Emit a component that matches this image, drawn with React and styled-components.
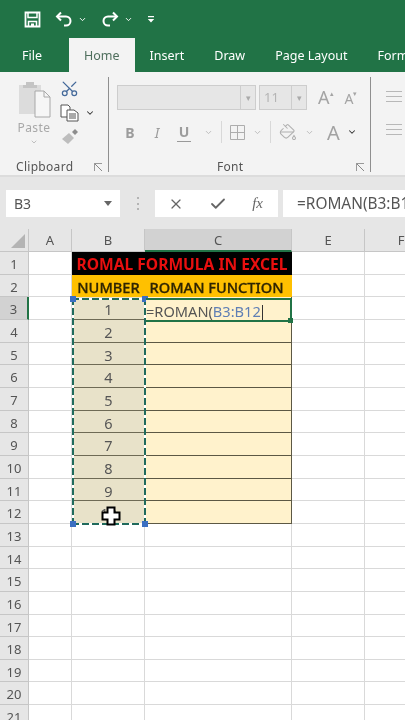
import React from "react";
import styled, { createGlobalStyle } from "styled-components";
import { Scissors, PaintBucket, ChevronDown, X, Check } from "lucide-react";

const Global = createGlobalStyle`
html, body { margin: 0; padding: 0; background: #fff; }
body { font-family: "Noto Sans", "Open Sans", sans-serif; overflow: hidden; }
`;

const rowCount = 21;
const numbers = ["1", "2", "3", "4", "5", "6", "7", "8", "9", "10"];

const Chev = ({ size = 9, color = "#555" }) => (
  <ChevronDown size={size} color={color} strokeWidth={2.5} />
);

const App = () => {
  const rows = [];
  for (let r = 1; r <= rowCount; r++) rows.push(r);

  return (
    <Page>
      <Global />
      <TitleBar>
        <svg width="17" height="17" viewBox="0 0 17 17" fill="none" stroke="#fff" strokeWidth="1.8">
          <path d="M1.5 1.5h14v14h-14z" />
          <path d="M4 1.5v5h9v-5M4.5 15.5v-5h8v5" strokeWidth="1.5" />
          <path d="M7 12.5h3v3h-3z" fill="#fff" stroke="none" />
        </svg>
        <QuickGroup>
          <svg width="18" height="17" viewBox="0 0 18 17" fill="none" stroke="#fff" strokeWidth="2">
            <path d="M6 1.5 2 5.5l4 4" />
            <path d="M2.5 5.5H11a4.5 4.5 0 0 1 0 9H9" />
          </svg>
          <Chev size={9} color="#fff" />
        </QuickGroup>
        <QuickGroup>
          <svg width="18" height="17" viewBox="0 0 18 17" fill="none" stroke="#fff" strokeWidth="2">
            <path d="m12 1.5 4 4-4 4" />
            <path d="M15.5 5.5H7a4.5 4.5 0 0 0 0 9h2" />
          </svg>
          <Chev size={9} color="#fff" />
        </QuickGroup>
        <svg width="9" height="9" viewBox="0 0 9 9" fill="#fff">
          <path d="M1 1h6v1.2H1zM0.8 4h6.4L4 7.6z" />
        </svg>
      </TitleBar>

      <Tabs>
        <Tab>File</Tab>
        <Tab $active>Home</Tab>
        <Tab>Insert</Tab>
        <Tab>Draw</Tab>
        <Tab>Page Layout</Tab>
        <Tab>Formulas</Tab>
      </Tabs>

      <Ribbon>
        <Group $width={109}>
          <GroupBody>
            <PasteCol>
              <svg width="33" height="38" viewBox="0 0 33 38">
                <path d="M1 5h22v29H1z" fill="#dcdcdc" />
                <path d="M8 2h8v3h3v3H5V5h3z" fill="#c4c4c4" />
                <path d="M17 11h9l6 6v20H17z" fill="#f6f6f6" stroke="#a8a8a8" />
                <path d="M26 11v6h6" fill="none" stroke="#a8a8a8" />
              </svg>
              <PasteLabel>Paste</PasteLabel>
              <Chev size={8} color="#b5b5b5" />
            </PasteCol>
            <SmallTools>
              <Scissors size={19} color="#44699a" strokeWidth={1.6} style={{ transform: "rotate(-90deg)" }} />
              <CopyRow>
                <svg width="19" height="18" viewBox="0 0 19 18" fill="#fff" stroke="#555" strokeWidth="1">
                  <path d="M1 1h7l2 2v10H1z" />
                  <path d="M7 6h7l4 3v8H7z" />
                  <path d="M9 10h7M9 12h7M9 14h7" />
                </svg>
                <Chev size={10} color="#333" />
              </CopyRow>
              <svg width="20" height="18" viewBox="0 0 20 18">
                <path d="M2 11 9 5l5 5-6 6z" fill="#bdbdbd" />
                <path d="M12 4l3-3 3 3-3 3z" fill="#8d8d8d" />
              </svg>
            </SmallTools>
          </GroupBody>
          <GroupFoot $indent={16}>
            Clipboard
            <Launcher />
          </GroupFoot>
        </Group>

        <Group $width={262}>
          <GroupBody $column>
            <FontRow>
              <Select $width={139} />
              <Select $width={48}>11</Select>
              <GrowIcons>
                <BigA>A<sup>▴</sup></BigA>
                <SmallA>A<sup>▾</sup></SmallA>
              </GrowIcons>
            </FontRow>
            <FontRow $second>
              <StyleLetter>B</StyleLetter>
              <StyleLetter $italic>I</StyleLetter>
              <StyleLetter $underline>U</StyleLetter>
              <Chev size={9} color="#bbb" />
              <Divider />
              <svg width="15" height="15" viewBox="0 0 15 15" fill="none" stroke="#adadad">
                <path d="M.5.5h14v14H.5zM7.5.5v14M.5 7.5h14" />
              </svg>
              <Chev size={9} color="#bbb" />
              <Divider />
              <PaintBucket size={18} color="#b0b0b0" strokeWidth={1.4} />
              <Chev size={9} color="#bbb" />
              <FontColor>A</FontColor>
              <Chev size={10} color="#333" />
            </FontRow>
          </GroupBody>
          <GroupFoot $indent={108}>
            Font
            <Launcher />
          </GroupFoot>
        </Group>

        <AlignGroup>
          <AlignLines />
          <AlignLines />
        </AlignGroup>
      </Ribbon>

      <FormulaBar>
        <NameBox>
          B3
          <Caret />
        </NameBox>
        <Dots>⋮</Dots>
        <FxBox>
          <X size={16} color="#666" strokeWidth={1.8} />
          <Check size={18} color="#666" strokeWidth={2.4} />
          <FxLabel>fx</FxLabel>
        </FxBox>
        <FormulaInput>=ROMAN(B3:B12</FormulaInput>
      </FormulaBar>

      <Sheet>
        <Corner>
          <svg width="14" height="14" viewBox="0 0 14 14">
            <path d="M14 0v14H0z" fill="#b4b4b4" />
          </svg>
        </Corner>
        <ColHead>A</ColHead>
        <ColHead>B</ColHead>
        <ColHead $selected>C</ColHead>
        <ColHead>E</ColHead>
        <ColHead>F</ColHead>

        {rows.map((r) => (
          <React.Fragment key={r}>
            <RowHead $selected={r === 3}>{r}</RowHead>
            <Cell />
            {r === 1 && <TitleCell>ROMAL FORMULA IN EXCEL</TitleCell>}
            {r === 2 && (
              <>
                <HeadCell>NUMBER</HeadCell>
                <HeadCell $tight>ROMAN FUNCTION</HeadCell>
              </>
            )}
            {r >= 3 && r <= 12 && (
              <>
                <NumCell>{numbers[r - 3]}</NumCell>
                <CreamCell />
              </>
            )}
            {r > 12 && (
              <>
                <Cell />
                <Cell />
              </>
            )}
            <Cell />
            <Cell />
          </React.Fragment>
        ))}

        <Ants>
          <Handle $pos="tl" />
          <Handle $pos="tr" />
          <Handle $pos="bl" />
          <Handle $pos="br" />
        </Ants>
        <Editor>
          =ROMAN(<RefText>B3:B12</RefText>
          <TextCaret />
          <EditorHandle />
        </Editor>
        <Pointer width="24" height="24" viewBox="0 0 24 24">
          <path d="M8.5 3.5h7v5h5v7h-5v5h-7v-5h-5v-7h5z" fill="#fff" stroke="#000" strokeWidth="2" />
        </Pointer>
      </Sheet>
    </Page>
  );
};

export default App;

const Page = styled.div`
  width: 405px;
  height: 720px;
  overflow: hidden;
  display: flex;
  flex-direction: column;
  filter: blur(0.35px);

  & > * {
    flex: none;
  }
`;

const TitleBar = styled.div`
  height: 38px;
  background: #217346;
  display: flex;
  align-items: center;
  gap: 14px;
  padding: 1px 0 0 24px;
  box-sizing: border-box;
`;

const QuickGroup = styled.div`
  display: flex;
  align-items: center;
  gap: 5px;
`;

const Tabs = styled.div`
  height: 34px;
  background: #217346;
  display: flex;
  padding-left: 7px;
  overflow: hidden;
  white-space: nowrap;
`;

const Tab = styled.div`
  padding: 9px 15px 0;
  font-size: 12.5px;
  line-height: 18px;
  color: ${(p) => (p.$active ? "#4f6f5d" : "#fff")};
  background: ${(p) => (p.$active ? "#f3f3f3" : "transparent")};
  margin-left: ${(p) => (p.$active ? "12px" : "0")};
`;

const Ribbon = styled.div`
  height: 105px;
  background: #f3f3f3;
  border-bottom: 2px solid #dcdcdc;
  box-sizing: border-box;
  display: flex;
  padding-top: 5px;
`;

const Group = styled.div`
  width: ${(p) => p.$width}px;
  height: 95px;
  border-right: 1px solid #8f8f8f;
  box-sizing: border-box;
  display: flex;
  flex-direction: column;
`;

const GroupBody = styled.div`
  flex: 1;
  min-height: 0;
  display: flex;
  flex-direction: ${(p) => (p.$column ? "column" : "row")};
`;

const GroupFoot = styled.div`
  height: 10px;
  padding: 0 6px 0 ${(p) => p.$indent}px;
  font-size: 12px;
  line-height: 14px;
  letter-spacing: 0.3px;
  color: #555;
  display: flex;
  justify-content: space-between;
  align-items: center;
`;

const Launcher = styled.span`
  width: 7px;
  height: 7px;
  border: 1px solid #999;
  border-width: 1px 0 0 1px;
  background: linear-gradient(45deg, transparent 45%, #888 45%, #888 55%, transparent 55%);
`;

const PasteCol = styled.div`
  width: 60px;
  box-sizing: border-box;
  display: flex;
  flex-direction: column;
  align-items: center;
  padding: 3px 0 0 8px;
`;

const PasteLabel = styled.div`
  font-size: 12px;
  line-height: 14px;
  margin-top: 3px;
  margin-bottom: 3px;
  letter-spacing: 0.4px;
  color: #a8a8a8;
`;

const SmallTools = styled.div`
  display: flex;
  flex-direction: column;
  align-items: flex-start;
  gap: 6px;
  padding-top: 2px;
`;

const CopyRow = styled.div`
  display: flex;
  align-items: center;
  gap: 6px;
`;

const FontRow = styled.div`
  display: flex;
  align-items: center;
  flex: none;
  height: ${(p) => (p.$second ? "32px" : "26px")};
  padding-left: ${(p) => (p.$second ? "14px" : "8px")};
  margin-top: ${(p) => (p.$second ? "6px" : "7px")};
  gap: ${(p) => (p.$second ? "8px" : "3px")};
`;

const Select = styled.div`
  width: ${(p) => p.$width}px;
  height: 25px;
  box-sizing: border-box;
  background: #e6e6e6;
  border: 1px solid #cdcdcd;
  font-size: 13px;
  line-height: 23px;
  padding-left: 4px;
  color: #b4b4b4;
  position: relative;

  &::after {
    content: "▾";
    position: absolute;
    top: 0;
    right: 0;
    width: 14px;
    height: 23px;
    border-left: 1px solid #cdcdcd;
    font-size: 9px;
    text-align: center;
    color: #aaa;
  }
`;

const GrowIcons = styled.div`
  display: flex;
  align-items: baseline;
  gap: 11px;
  margin-left: 8px;

  sup {
    font-size: 7px;
    vertical-align: 8px;
    line-height: 0;
  }
`;

const BigA = styled.span`
  font-size: 18px;
  color: #a4a4a4;
`;

const SmallA = styled.span`
  font-size: 14px;
  color: #a4a4a4;
`;

const StyleLetter = styled.span`
  width: 14px;
  font-size: 14px;
  text-align: center;
  color: #9c9c9c;
  font-family: "Noto Sans", sans-serif;
  font-weight: ${(p) => (p.$italic ? 400 : 700)};
  font-style: ${(p) => (p.$italic ? "italic" : "normal")};
  border-bottom: ${(p) => (p.$underline ? "1px solid #999" : "none")};
  margin-right: 5px;
`;

const Divider = styled.span`
  width: 1px;
  height: 22px;
  background: #d8d8d8;
`;

const FontColor = styled.span`
  font-size: 20px;
  color: #a2a2a2;
  margin-left: 5px;
  margin-right: -1px;
`;

const AlignGroup = styled.div`
  padding: 14px 0 0 15px;
  display: flex;
  flex-direction: column;
  gap: 22px;
`;

const AlignLines = styled.div`
  width: 16px;
  height: 9px;
  border-top: 1px solid #b8b8b8;
  border-bottom: 1px solid #b8b8b8;
  background: linear-gradient(#b8b8b8, #b8b8b8) center / 100% 1px no-repeat;
`;

const FormulaBar = styled.div`
  height: 52px;
  background: #e6e6e6;
  display: flex;
  align-items: flex-start;
  padding: 13px 0 0 6px;
  box-sizing: border-box;
`;

const NameBox = styled.div`
  width: 114px;
  height: 27px;
  background: #fff;
  font-size: 14px;
  line-height: 28px;
  padding-left: 8px;
  box-sizing: border-box;
  color: #555;
  position: relative;
`;

const Caret = styled.span`
  position: absolute;
  right: 8px;
  top: 11px;
  border: 4px solid transparent;
  border-top: 5px solid #666;
  border-bottom: 0;
`;

const Dots = styled.div`
  width: 35px;
  text-align: center;
  font-size: 16px;
  line-height: 27px;
  color: #aaa;
`;

const FxBox = styled.div`
  width: 123px;
  height: 27px;
  background: #fff;
  display: flex;
  align-items: center;
  justify-content: space-between;
  padding: 0 15px 0 13px;
  box-sizing: border-box;
`;

const FxLabel = styled.span`
  font-family: "Liberation Serif", serif;
  font-style: italic;
  font-size: 15px;
  color: #666;
`;

const FormulaInput = styled.div`
  flex: 1;
  min-width: 0;
  height: 27px;
  margin-left: 5px;
  background: #fff;
  padding-left: 14px;
  font-size: 15.4px;
  line-height: 28px;
  color: #555;
  white-space: nowrap;
  overflow: hidden;
`;

const Sheet = styled.div`
  position: relative;
  display: grid;
  grid-template-columns: 29px 43px 73px 147px 73px 73px;
  grid-auto-rows: 22.67px;
  grid-template-rows: 23px;
  background: #fff;
  font-family: "Noto Sans", sans-serif;
`;

const Corner = styled.div`
  background: #e6e6e6;
  border-right: 1px solid #c6c6c6;
  border-bottom: 1px solid #c6c6c6;
  display: flex;
  align-items: flex-end;
  justify-content: flex-end;
  padding: 0 3px 3px 0;
  box-sizing: border-box;
`;

const ColHead = styled.div`
  background: ${(p) => (p.$selected ? "#d2d2d2" : "#e6e6e6")};
  border-right: 1px solid #c6c6c6;
  border-bottom: ${(p) => (p.$selected ? "2px solid #217346" : "1px solid #c6c6c6")};
  box-sizing: border-box;
  font-size: 13px;
  line-height: 23px;
  text-align: center;
  color: #555;
`;

const RowHead = styled.div`
  background: ${(p) => (p.$selected ? "#d2d2d2" : "#e6e6e6")};
  border-right: ${(p) => (p.$selected ? "2px solid #217346" : "1px solid #c6c6c6")};
  border-bottom: 1px solid #c6c6c6;
  box-sizing: border-box;
  font-size: 13px;
  line-height: 24px;
  text-align: center;
  color: #555;
`;

const Cell = styled.div`
  border-right: 1px solid #d9d9d9;
  border-bottom: 1px solid #d9d9d9;
  box-sizing: border-box;
`;

const TitleCell = styled.div`
  grid-column: span 2;
  background: #000;
  color: #e80f0f;
  font-size: 15.6px;
  font-weight: 700;
  line-height: 24px;
  text-align: center;
  white-space: nowrap;
  overflow: hidden;
`;

const HeadCell = styled.div`
  background: #ffc000;
  color: #2e2400;
  font-size: 14.6px;
  font-weight: 500;
  -webkit-text-stroke: 0.3px #2e2400;
  line-height: 24px;
  padding-right: ${(p) => (p.$tight ? "4px" : "0")};
  text-align: center;
  white-space: nowrap;
  overflow: hidden;
`;

const NumCell = styled.div`
  background: #e8e2c9;
  border-bottom: 1px solid #6e6a55;
  box-sizing: border-box;
  font-size: 14.5px;
  line-height: 25px;
  text-align: center;
  color: #555;
`;

const CreamCell = styled.div`
  background: #fff2cc;
  border-right: 1px solid #5c5844;
  border-bottom: 1px solid #5c5844;
  box-sizing: border-box;
`;

const Ants = styled.div`
  position: absolute;
  left: 72px;
  top: 69px;
  width: 74px;
  height: 227px;
  box-sizing: border-box;
  background:
    repeating-linear-gradient(90deg, #1f6a5c 0 7px, #fff 7px 10px) top / 100% 2px no-repeat,
    repeating-linear-gradient(90deg, #1f6a5c 0 7px, #fff 7px 10px) bottom / 100% 2px no-repeat,
    repeating-linear-gradient(0deg, #1f6a5c 0 7px, #fff 7px 10px) left / 2px 100% no-repeat,
    repeating-linear-gradient(0deg, #1f6a5c 0 7px, #fff 7px 10px) right / 2px 100% no-repeat;
`;

const Handle = styled.span`
  position: absolute;
  width: 6px;
  height: 6px;
  background: #3b6fc2;
  left: ${(p) => (p.$pos[1] === "l" ? "-2px" : "auto")};
  right: ${(p) => (p.$pos[1] === "r" ? "-2px" : "auto")};
  top: ${(p) => (p.$pos[0] === "t" ? "-2px" : "auto")};
  bottom: ${(p) => (p.$pos[0] === "b" ? "-2px" : "auto")};
`;

const Editor = styled.div`
  position: absolute;
  left: 146px;
  top: 69px;
  width: 146px;
  height: 24px;
  box-sizing: border-box;
  border: 2px solid #217346;
  border-left: 0;
  background: #fff2cc;
  font-size: 14.6px;
  line-height: 22px;
  color: #555;
  white-space: nowrap;
`;

const RefText = styled.span`
  color: #5f7fb5;
`;

const TextCaret = styled.span`
  display: inline-block;
  width: 1px;
  height: 15px;
  margin-left: 1px;
  background: #333;
  vertical-align: -3px;
`;

const EditorHandle = styled.span`
  position: absolute;
  right: -3px;
  bottom: -3px;
  width: 5px;
  height: 5px;
  background: #217346;
`;

const Pointer = styled.svg`
  position: absolute;
  left: 99px;
  top: 275px;
`;
